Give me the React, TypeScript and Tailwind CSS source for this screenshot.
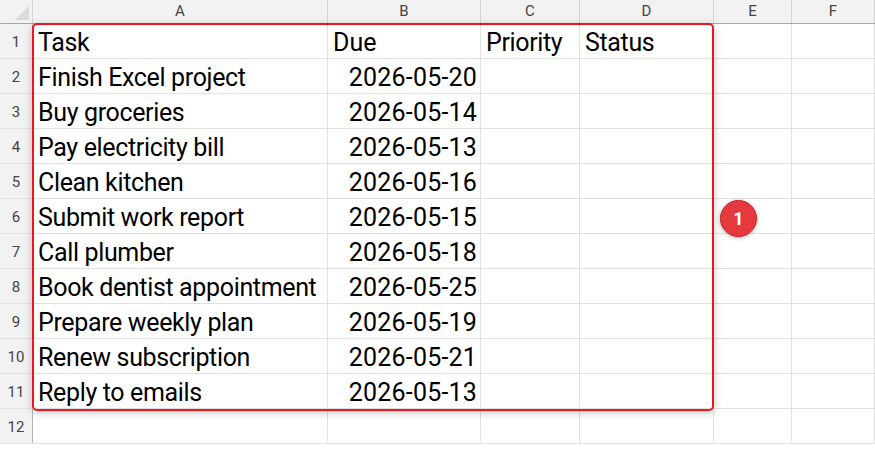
import React from "react";

const COLS = [
  { label: "A", w: "w-[295px]" },
  { label: "B", w: "w-[153px]" },
  { label: "C", w: "w-[99px]" },
  { label: "D", w: "w-[134px]" },
  { label: "E", w: "w-[78px]" },
  { label: "F", w: "w-[83px]" },
];

const ROWS: [string, string, string, string][] = [
  ["Task", "Due", "Priority", "Status"],
  ["Finish Excel project", "2026-05-20", "", ""],
  ["Buy groceries", "2026-05-14", "", ""],
  ["Pay electricity bill", "2026-05-13", "", ""],
  ["Clean kitchen", "2026-05-16", "", ""],
  ["Submit work report", "2026-05-15", "", ""],
  ["Call plumber", "2026-05-18", "", ""],
  ["Book dentist appointment", "2026-05-25", "", ""],
  ["Prepare weekly plan", "2026-05-19", "", ""],
  ["Renew subscription", "2026-05-21", "", ""],
  ["Reply to emails", "2026-05-13", "", ""],
  ["", "", "", ""],
];

export default function App() {
  return (
    <div className="relative w-[875px] h-[450px] overflow-hidden bg-white font-['Roboto',sans-serif]">
      {/* column headers */}
      <div className="flex h-[24px] bg-[#f2f2f2] border-b border-[#a8a8a8]">
        <div className="w-[33px] shrink-0 border-r border-[#d4d4d4] flex items-end justify-end p-[3px]">
          <svg width="14" height="14" viewBox="0 0 14 14">
            <polygon points="14,0 14,14 0,14" fill="#dadada" />
          </svg>
        </div>
        {COLS.map((c) => (
          <div
            key={c.label}
            className={`${c.w} shrink-0 border-r border-[#d4d4d4] flex items-center justify-center text-[15px] text-[#444] leading-none`}
          >
            {c.label}
          </div>
        ))}
      </div>

      {/* rows */}
      {ROWS.map((r, i) => (
        <div key={i} className="flex h-[35px] border-b border-[#e1e1e1]">
          <div className="w-[33px] shrink-0 bg-[#f2f2f2] border-r border-[#b4b4b4] flex items-center justify-center text-[15px] text-[#444] leading-none pt-[3px]">
            {i + 1}
          </div>
          <div className="w-[295px] shrink-0 border-r border-[#e1e1e1] flex items-end pl-[5px] text-[25px] text-black leading-[30px] tracking-[-0.35px] whitespace-nowrap">
            {r[0]}
          </div>
          <div
            className={`w-[153px] shrink-0 border-r border-[#e1e1e1] flex items-end text-[25px] text-black leading-[30px] whitespace-nowrap ${
              i === 0 ? "justify-start pl-[5px]" : "justify-end pr-[3px] tracking-[0.2px]"
            }`}
          >
            {r[1]}
          </div>
          <div className="w-[99px] shrink-0 border-r border-[#e1e1e1] flex items-end pl-[5px] text-[25px] text-black leading-[30px] tracking-[-0.35px] whitespace-nowrap">
            {r[2]}
          </div>
          <div className="w-[134px] shrink-0 border-r border-[#e1e1e1] flex items-end pl-[5px] text-[25px] text-black leading-[30px] tracking-[-0.35px] whitespace-nowrap">
            {r[3]}
          </div>
          <div className="w-[78px] shrink-0 border-r border-[#e1e1e1]" />
          <div className="w-[83px] shrink-0 border-r border-[#e1e1e1]" />
        </div>
      ))}

      {/* highlight frame over A1:D11 */}
      <div className="absolute left-[32px] top-[23px] w-[682px] h-[388px] rounded-[5px] border-2 border-[#f0141c] shadow-[0_2px_8px_rgba(0,0,0,0.22)] pointer-events-none" />

      {/* callout badge */}
      <div className="absolute left-[720px] top-[200px] w-[37px] h-[37px] rounded-full bg-[#e6393e] border border-[#cc1f25] shadow-[0_1px_4px_rgba(0,0,0,0.3)] flex items-center justify-center text-white font-bold text-[18px] leading-none">
        1
      </div>
    </div>
  );
}
